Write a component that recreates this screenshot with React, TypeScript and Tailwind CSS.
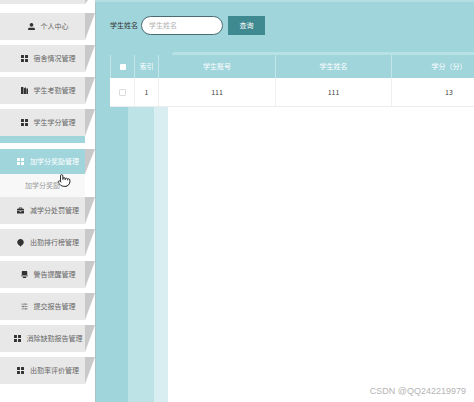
import { FaBriefcase } from 'react-icons/fa';
import { LuSlidersHorizontal } from 'react-icons/lu';
import { Pointer } from 'lucide-react';

const cjk = '[font-family:"Noto_Sans_CJK_SC","Liberation_Sans",sans-serif]';

function GridIcon({ className = 'text-[#333]' }: { className?: string }) {
  return (
    <svg viewBox="0 0 9 9" className={`w-[7px] h-[7px] ${className}`} fill="currentColor">
      <rect x="0" y="0" width="3.8" height="3.8" rx="0.4" />
      <rect x="5.2" y="0" width="3.8" height="3.8" rx="0.4" />
      <rect x="0" y="5.2" width="3.8" height="3.8" rx="0.4" />
      <rect x="5.2" y="5.2" width="3.8" height="3.8" rx="0.4" />
    </svg>
  );
}

function UserIcon() {
  return (
    <svg viewBox="0 0 9 9" className="w-[7px] h-[7px] text-[#333]" fill="currentColor">
      <circle cx="4.5" cy="2.4" r="2.4" />
      <path d="M0.6 6.2h7.8L9 9H0z" />
    </svg>
  );
}

function BookIcon() {
  return (
    <svg viewBox="0 0 9 9" className="w-[7px] h-[7px] text-[#333]" fill="currentColor">
      <path d="M0 0h2.6v9H0zM3.2 0l1.6 1.6L6.4 0v9H3.2zM6.9 2H9v7H6.9z" />
    </svg>
  );
}

function BalloonIcon() {
  return (
    <svg viewBox="0 0 9 11" className="w-[7px] h-[8px] text-[#333]" fill="currentColor">
      <path d="M4.5 0C7 0 9 1.9 9 4.3 9 6.7 6.6 8.6 5.2 9.4L4.5 11l-.7-1.6C2.4 8.6 0 6.7 0 4.3 0 1.9 2 0 4.5 0z" />
    </svg>
  );
}

function TrayIcon() {
  return (
    <svg viewBox="0 0 9 9" className="w-[7px] h-[7px] text-[#333]" fill="currentColor">
      <path d="M1.6 0h5.8l.6.6v4.4H1V.6zM0 5.7h9v1.1H0zM2 7.4h5L6.4 9H2.6z" />
    </svg>
  );
}

function MenuItem({ icon, label }: { icon: React.ReactNode; label: string }) {
  return (
    <div className="flex h-[27px] shrink-0">
      <div className="w-[85px] pl-[11px] bg-[#e8e8e8] flex items-center justify-center gap-[6px] text-[7px] text-[#666]">
        {icon}
        <span>{label}</span>
      </div>
      <div className="w-[10px] bg-[#c9c9c9] [clip-path:polygon(0_0,100%_0,0_100%)]" />
    </div>
  );
}

const columns = [
  { title: '索引', width: 'w-[24px]', value: '1' },
  { title: '学生账号', width: 'w-[117px]', value: '111' },
  { title: '学生姓名', width: 'w-[116px]', value: '111' },
  { title: '学分（分）', width: 'w-[115px]', value: '13' },
];

export default function App() {
  return (
    <div className={`flex w-[474px] h-[402px] overflow-hidden bg-white ${cjk}`}>
      <aside className="relative w-[95px] shrink-0 flex flex-col bg-white">
        <div className="flex h-[4px] shrink-0">
          <div className="w-[85px] bg-[#e8e8e8]" />
          <div className="w-[3px] bg-[#c9c9c9] [clip-path:polygon(0_0,100%_0,0_100%)]" />
        </div>
        <div className="flex flex-col gap-[5px] mt-[9px]">
          <MenuItem icon={<UserIcon />} label="个人中心" />
          <MenuItem icon={<GridIcon />} label="宿舍情况管理" />
          <MenuItem icon={<BookIcon />} label="学生考勤管理" />
          <MenuItem icon={<GridIcon />} label="学生学分管理" />
        </div>
        <div className="h-[7px] w-[85px] bg-[#9fd5db] shrink-0" />
        <div className="flex h-[25px] mt-[6px] shrink-0">
          <div className="w-[85px] pl-[11px] bg-[#9fd5db] flex items-center justify-center gap-[6px] text-[7px] text-white">
            <GridIcon className="text-white" />
            <span>加学分奖励管理</span>
          </div>
          <div className="w-[10px] bg-[#c9c9c9] [clip-path:polygon(0_0,100%_0,0_100%)]" />
        </div>
        <div className="h-[23px] w-[85px] bg-[#f8f8f8] flex items-center justify-center text-[7px] text-[#999] shrink-0">
          加学分奖励
        </div>
        <div className="flex flex-col gap-[5px]">
          <MenuItem icon={<FaBriefcase className="w-[7px] h-[7px] text-[#333]" />} label="减学分处罚管理" />
          <MenuItem icon={<BalloonIcon />} label="出勤排行榜管理" />
          <MenuItem icon={<TrayIcon />} label="警告提醒管理" />
          <MenuItem icon={<LuSlidersHorizontal className="w-[7px] h-[7px] text-[#555]" />} label="提交报告管理" />
          <MenuItem icon={<GridIcon />} label="消除缺勤报告管理" />
          <MenuItem icon={<GridIcon />} label="出勤率评价管理" />
        </div>
        <Pointer className="absolute left-[57px] top-[172px] w-[14px] h-[17px] text-[#222] fill-white" strokeWidth={1.6} />
      </aside>

      <main className="flex-1 min-w-0 flex flex-col">
        <div className="h-[107px] shrink-0 bg-[#9fd5db] border-t-2 border-[#b3dfe3] pl-[15px] flex flex-col overflow-hidden shadow-[inset_1px_0_0_#a8c4c8]">
          <div className="flex items-center h-[19px] mt-[14px] shrink-0">
            <span className="text-[7px] text-[#333] w-[31px]">学生姓名</span>
            <div className="w-[82px] h-[19px] rounded-full bg-white border border-[#4a6b72] flex items-center pl-[7px] text-[7px] text-[#b0b0b0]">
              学生姓名
            </div>
            <div className="ml-[5px] w-[37px] h-[19px] bg-[#3f8a91] text-white text-[7px] flex items-center justify-center">
              查询
            </div>
          </div>
          <div className="h-[3px] mt-[17px] ml-[62px] rounded-tl-[6px] bg-[#b7e2e5] shrink-0" />
          <div className="flex h-[23px] shrink-0 bg-[#9fd5db] text-[7px] text-white">
            <div className="w-[24px] shrink-0 flex items-center justify-center border-l border-[#c4e6e9]">
              <span className="w-[6px] h-[6px] bg-white rounded-[1px]" />
            </div>
            {columns.map((c) => (
              <div key={c.title} className={`${c.width} shrink-0 flex items-center justify-center border-l border-[#c4e6e9]`}>
                {c.title}
              </div>
            ))}
          </div>
          <div className="flex h-[29px] shrink-0 bg-white text-[7px] text-[#444] border-b border-[#ededed]">
            <div className="w-[24px] shrink-0 flex items-center justify-center">
              <span className="w-[7px] h-[7px] bg-white border border-[#dcdcdc] rounded-[1px]" />
            </div>
            {columns.map((c) => (
              <div key={c.title} className={`${c.width} shrink-0 flex items-center justify-center border-l border-[#efefef]`}>
                {c.value}
              </div>
            ))}
          </div>
        </div>
        <div className="flex-1 flex min-h-0">
          <div className="w-[33px] bg-[#9fd5db] shadow-[inset_1px_0_0_#a8c4c8]" />
          <div className="w-[26px] bg-[#bde3e7]" />
          <div className="w-[14px] bg-[#d8eef0]" />
          <div className="flex-1 flex items-end justify-end pr-[8px] pb-[6px]">
            <span className="text-[9px] leading-none text-[#b4b4b4] [font-family:'Liberation_Sans',sans-serif]">CSDN @QQ242219979</span>
          </div>
        </div>
      </main>
    </div>
  );
}
